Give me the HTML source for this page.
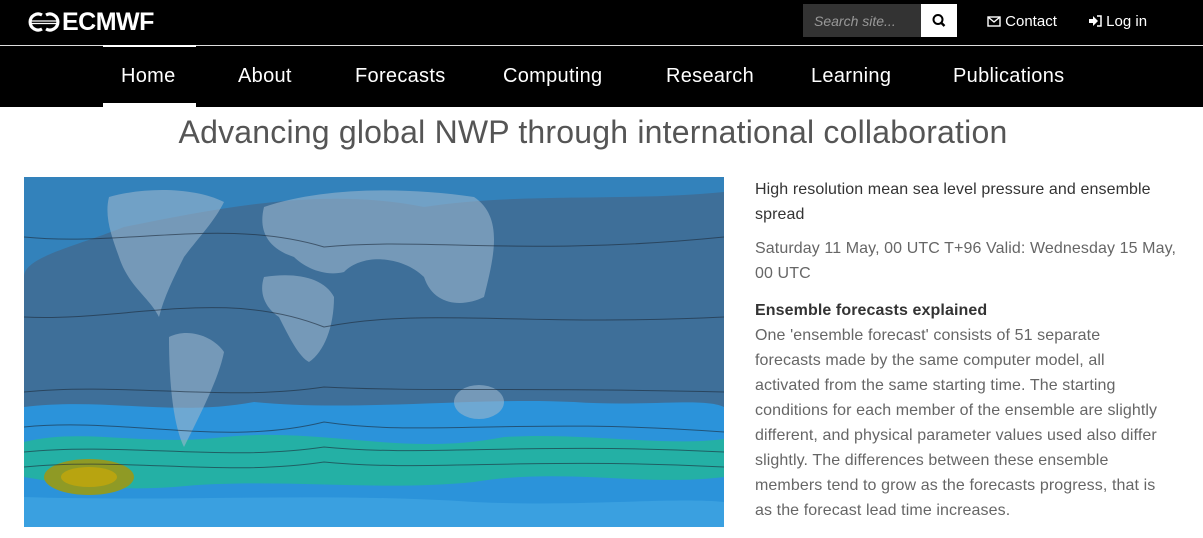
<!DOCTYPE html>
<html><head><meta charset="utf-8"><style>
*{margin:0;padding:0;box-sizing:border-box}
body{width:1203px;height:538px;overflow:hidden;background:#fff;font-family:"Liberation Sans",sans-serif;color:#333;position:relative}
.top{position:absolute;left:0;top:0;width:1203px;height:45px;background:#000}
.line{position:absolute;left:0;top:45px;width:1203px;height:1px;background:#ddd}
.nav{position:absolute;left:0;top:46px;width:1203px;height:61px;background:#000}
.nav a{position:absolute;top:19px;color:#fff;font-size:20px;text-decoration:none;white-space:nowrap;letter-spacing:0.3px}
.home{position:absolute;left:103px;top:45px;width:93px;height:63px;border-top:2px solid #fff;border-bottom:5px solid #fff}
.logo{position:absolute;left:26px;top:8px;color:#fff;font-weight:bold;font-size:25px;letter-spacing:-0.5px}
.search{position:absolute;left:803px;top:4px;width:118px;height:33px;background:#333;color:#999;font-style:italic;font-size:14px;padding:9px 0 0 11px}
.sbtn{position:absolute;left:921px;top:4px;width:36px;height:33px;background:#fff}
.hl{position:absolute;top:13px;color:#fff;font-size:15px;white-space:nowrap}
h1{position:absolute;left:0;width:1186px;top:114px;text-align:center;font-weight:normal;font-size:32px;color:#555;letter-spacing:0.2px}
.side{position:absolute;left:755px;top:177px;font-size:16px;line-height:25px;white-space:nowrap;letter-spacing:0.1px}
.g{color:#666}
</style></head><body>
<div class="top"></div>
<div class="logo"><svg width="36" height="22" viewBox="0 0 36 22" style="vertical-align:-3px"><g fill="none" stroke="#fff" stroke-width="3.2"><path d="M16 4a8 8 0 1 0 0 14"/><path d="M20 4a8 8 0 1 1 0 14"/></g><path d="M4 10h28M4 12.5h28" stroke="#fff" stroke-width="1.2"/></svg>ECMWF</div>
<div class="search">Search site...</div>
<div class="sbtn"><svg width="36" height="33"><circle cx="17" cy="15.5" r="4.5" fill="none" stroke="#000" stroke-width="2"/><path d="M20.5 19l3 3" stroke="#000" stroke-width="2.4"/></svg></div>
<div class="hl" style="left:987px"><svg width="14" height="11" style="vertical-align:-1px"><rect x="1" y="1" width="12" height="9" fill="none" stroke="#fff" stroke-width="1.4"/><path d="M1 1l6 5 6-5" fill="none" stroke="#fff" stroke-width="1.4"/></svg> Contact</div>
<div class="hl" style="left:1089px"><svg width="13" height="12" style="vertical-align:-1px"><path d="M0 4h4V1l5 5-5 5V8H0z" fill="#fff"/><path d="M8 1h4v10H8" fill="none" stroke="#fff" stroke-width="1.5"/></svg> Log in</div>
<div class="line"></div>
<div class="nav">
<a style="left:121px">Home</a><a style="left:238px">About</a><a style="left:355px">Forecasts</a><a style="left:503px">Computing</a><a style="left:666px">Research</a><a style="left:811px">Learning</a><a style="left:953px">Publications</a>
</div>
<div class="home"></div>
<h1>Advancing global NWP through international collaboration</h1>
<svg style="position:absolute;left:24px;top:177px" width="700" height="350" viewBox="0 0 700 350">
<rect width="700" height="350" fill="#3e6f99"/>
<path d="M0 0h700v15C600 25 500 15 400 30 300 10 200 30 100 50 50 70 0 80 0 100z" fill="#2d8fd2" opacity=".6"/>
<path d="M0 230C80 220 150 240 230 225 330 235 450 220 550 225 620 230 680 220 700 230V350H0z" fill="#2b93da"/>
<path d="M0 265C60 250 120 270 200 260 300 250 380 280 480 260 560 255 640 270 700 262V300C620 310 540 290 450 305 350 315 250 300 150 310 80 315 30 305 0 300z" fill="#24b0a5"/>
<ellipse cx="65" cy="300" rx="45" ry="18" fill="#8f9a25"/>
<ellipse cx="65" cy="300" rx="28" ry="10" fill="#b8a410"/>
<path d="M0 320C150 325 300 315 450 325 550 330 650 320 700 325V350H0z" fill="#3aa0e0"/>
<g fill="#9bb6cd" opacity=".6">
<path d="M85 20C120 10 170 10 200 25 190 45 175 60 160 80 150 100 140 120 135 140 125 120 105 110 95 80 88 60 80 40 85 20z"/>
<path d="M145 160C165 150 190 160 200 175 195 200 180 230 160 270 150 250 145 210 145 160z"/>
<path d="M240 30C300 10 380 10 450 20 480 40 470 80 460 120 440 130 410 130 400 100 380 80 340 75 320 95 300 100 280 90 270 80 240 70 235 50 240 30z"/>
<path d="M240 100C270 95 300 100 310 120 310 150 300 175 285 185 275 180 265 160 255 140 240 130 235 115 240 100z"/>
<ellipse cx="455" cy="225" rx="25" ry="17"/>
</g>
<g fill="none" stroke="#1c2a38" stroke-width="1" opacity=".6">
<path d="M0 140C100 145 200 110 300 150 400 130 500 150 700 140"/>
<path d="M0 215C100 205 200 225 300 210 400 215 500 210 700 215"/>
<path d="M0 250C100 240 200 270 300 245 400 260 500 240 700 255"/>
<path d="M0 275C100 265 200 285 300 270 400 280 500 265 700 275"/>
<path d="M0 290C100 280 200 300 300 285 400 295 500 280 700 290"/>
<path d="M0 60C100 70 200 40 300 70 400 60 500 80 700 60"/>
</g>
</svg>
<div class="side">High resolution mean sea level pressure and ensemble<br>spread
<div class="g" style="margin-top:9px">Saturday 11 May, 00 UTC T+96 Valid: Wednesday 15 May,<br>00 UTC</div>
<div style="margin-top:12px"><b>Ensemble forecasts explained</b></div>
<div class="g">One 'ensemble forecast' consists of 51 separate<br>forecasts made by the same computer model, all<br>activated from the same starting time. The starting<br>conditions for each member of the ensemble are slightly<br>different, and physical parameter values used also differ<br>slightly. The differences between these ensemble<br>members tend to grow as the forecasts progress, that is<br>as the forecast lead time increases.</div>
</div>
</body></html>
